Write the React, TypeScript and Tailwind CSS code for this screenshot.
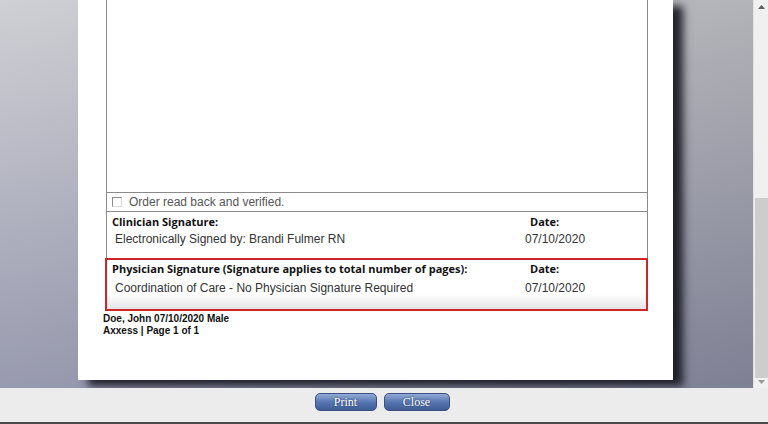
const sans = { fontFamily: '"Liberation Sans", Arial, sans-serif' }

function Checkbox() {
  return (
    <span className="inline-block w-[10px] h-[10px] border border-t-[#8a8a8a] border-l-[#8a8a8a] border-r-[#dcdcdc] border-b-[#dcdcdc] bg-white" />
  )
}

function SigRow({ title, line, date, gap }: { title: string; line: string; date: string; gap: string }) {
  return (
    <div className="grid grid-cols-[418px_1fr]">
      <div className="pl-[5px]">
        <div className="font-['Open_Sans',sans-serif] font-bold text-[11px] leading-[14px] text-[#111]">{title}</div>
        <div className={`pl-[3px] ${gap} font-['Liberation_Sans',Arial,sans-serif] text-[12px] leading-[14px] text-[#333]`}>{line}</div>
      </div>
      <div>
        <div className="pl-[5px] font-['Open_Sans',sans-serif] font-bold text-[11px] leading-[14px] text-[#111]">Date:</div>
        <div className={`${gap} font-['Liberation_Sans',Arial,sans-serif] text-[12px] leading-[14px] text-[#333]`}>{date}</div>
      </div>
    </div>
  )
}

export default function App() {
  return (
    <div className="w-[768px] h-[424px] flex flex-col overflow-hidden" style={sans}>
      <div className="flex h-[388px]">
        {/* viewer backdrop */}
        <div className="flex-1 bg-[linear-gradient(to_right,rgba(255,255,255,0.08),rgba(0,0,0,0.12)),linear-gradient(to_bottom,#cbccd1,#8f91a8)]">
          <div className="ml-[78px] w-[595px] h-[380px] bg-white shadow-[10px_6px_8px_rgba(20,20,30,0.9)] flex flex-col">
            <div className="ml-[28px] w-[542px] flex flex-col">
              <div className="h-[192px] border-x border-[#8a8a8a]" />
              <div className="h-[20px] border border-[#8a8a8a] flex items-center gap-[7px] pl-[5px]">
                <Checkbox />
                <span className="text-[12px] text-[#555]">Order read back and verified.</span>
              </div>
              <div className="h-[46px] border-x border-[#8a8a8a] pt-[3px]">
                <SigRow
                  title="Clinician Signature:"
                  line="Electronically Signed by: Brandi Fulmer RN"
                  date="07/10/2020"
                  gap="pt-[3px]"
                />
              </div>
              <div className="h-[53px] border-2 border-[#d0242b] pt-[2px] -ml-[1px] bg-[linear-gradient(to_bottom,#ffffff_70%,#e4e4e4)]">
                <SigRow
                  title="Physician Signature (Signature applies to total number of pages):"
                  line="Coordination of Care - No Physician Signature Required"
                  date="07/10/2020"
                  gap="pt-[5px]"
                />
              </div>
            </div>
            <div className="ml-[25px] pt-[2px] text-[10px] leading-[12px] font-bold text-[#111]">
              <div>Doe, John 07/10/2020 Male</div>
              <div>Axxess | Page 1 of 1</div>
            </div>
          </div>
        </div>
        {/* scrollbar */}
        <div className="w-[15px] bg-[#f0f0f0] border-l border-[#e2e2e2] flex flex-col items-center">
          <div className="h-[14px] flex items-center justify-center">
            <svg width="7" height="4" viewBox="0 0 7 4"><path d="M0 4L3.5 0L7 4Z" fill="#606060" /></svg>
          </div>
          <div className="h-[184px]" />
          <div className="w-[13px] h-[180px] bg-[#cdcdcd]" />
          <div className="flex-1 flex items-end justify-center pb-[4px]">
            <svg width="7" height="4" viewBox="0 0 7 4"><path d="M0 0L3.5 4L7 0Z" fill="#9a9a9a" /></svg>
          </div>
        </div>
      </div>
      {/* button bar */}
      <div className="flex-1 bg-[#ececec] border-b-2 border-[#4a4a4a] flex justify-center items-start pt-[5px] gap-[7px] pr-[4px]">
        <button className="w-[62px] h-[18px] rounded-[5px] border border-[#3b5183] bg-[linear-gradient(to_bottom,#93aad6,#5877b2_50%,#3e5b95)] text-white text-[12px] leading-[16px] font-['Liberation_Serif',serif] [text-shadow:0_0_2px_#1e2f55]">
          Print
        </button>
        <button className="w-[66px] h-[18px] rounded-[5px] border border-[#3b5183] bg-[linear-gradient(to_bottom,#93aad6,#5877b2_50%,#3e5b95)] text-white text-[12px] leading-[16px] font-['Liberation_Serif',serif] [text-shadow:0_0_2px_#1e2f55]">
          Close
        </button>
      </div>
    </div>
  )
}
